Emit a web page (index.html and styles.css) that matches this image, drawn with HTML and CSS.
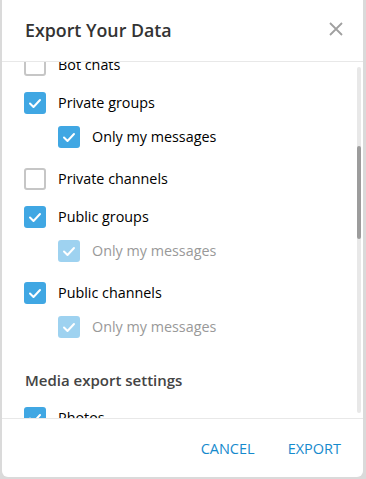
FILE: index.html
```html
<!DOCTYPE html>
<html>
<head>
<meta charset="utf-8">
<link rel="stylesheet" href="styles.css">
</head>
<body>
<div class="dialog">
  <div class="header">
    <div class="title">Export Your Data</div>
    <svg class="close" width="14" height="14" viewBox="0 0 14 14"><path d="M1 1L13 13M13 1L1 13" stroke="#a0a0a0" stroke-width="1.8" fill="none"/></svg>
  </div>
  <div class="content">
    <div class="list">
      <div class="row"><span class="box"></span><span class="label">Bot chats</span></div>
      <div class="row"><span class="box on"><svg viewBox="0 0 22 22"><path d="M6 11.5L9.5 15L16 8" /></svg></span><span class="label">Private groups</span></div>
      <div class="row sub"><span class="box on"><svg viewBox="0 0 22 22"><path d="M6 11.5L9.5 15L16 8" /></svg></span><span class="label">Only my messages</span></div>
      <div class="row"><span class="box"></span><span class="label">Private channels</span></div>
      <div class="row"><span class="box on"><svg viewBox="0 0 22 22"><path d="M6 11.5L9.5 15L16 8" /></svg></span><span class="label">Public groups</span></div>
      <div class="row sub faded"><span class="box on"><svg viewBox="0 0 22 22"><path d="M6 11.5L9.5 15L16 8" /></svg></span><span class="label">Only my messages</span></div>
      <div class="row"><span class="box on"><svg viewBox="0 0 22 22"><path d="M6 11.5L9.5 15L16 8" /></svg></span><span class="label">Public channels</span></div>
      <div class="row sub faded"><span class="box on"><svg viewBox="0 0 22 22"><path d="M6 11.5L9.5 15L16 8" /></svg></span><span class="label">Only my messages</span></div>
      <div class="section">Media export settings</div>
      <div class="row"><span class="box on"><svg viewBox="0 0 22 22"><path d="M6 11.5L9.5 15L16 8" /></svg></span><span class="label">Photos</span></div>
    </div>
    <div class="scrollbar"><div class="thumb"></div></div>
  </div>
  <div class="footer">
    <span class="btn">CANCEL</span>
    <span class="btn">EXPORT</span>
  </div>
</div>
</body>
</html>
```
FILE: styles.css
```css
html, body {
  margin: 0;
  padding: 0;
}
body {
  width: 366px;
  height: 479px;
  overflow: hidden;
  background: #dadada;
  font-family: "Open Sans", "Noto Sans", sans-serif;
}
.dialog {
  margin-left: 2px;
  width: 361px;
  height: 477px;
  background: #fff;
  border-radius: 0 0 6px 6px;
  display: flex;
  flex-direction: column;
  overflow: hidden;
}
.header {
  height: 61px;
  flex: none;
  border-bottom: 1px solid #e8e8e8;
  display: flex;
  align-items: center;
  justify-content: space-between;
  padding: 0 20px 0 23px;
  box-sizing: content-box;
}
.title {
  font-size: 17.8px;
  font-weight: 600;
  color: #333;
  line-height: 24px;
  margin-top: -1px;
}
.close {
  display: block;
  margin-top: -3px;
}
.content {
  flex: 1;
  position: relative;
  overflow: hidden;
}
.list {
  margin-top: -16px;
}
.row {
  display: flex;
  align-items: center;
  gap: 12px;
  padding: 8px 0 8px 22px;
}
.row.sub {
  padding: 4px 0 12px 56px;
}
.box {
  width: 22px;
  height: 22px;
  box-sizing: border-box;
  border: 2px solid #c6c6c6;
  border-radius: 3px;
  flex: none;
  display: block;
}
.box.on {
  border: none;
  background: #40a7e3;
}
.box svg {
  display: block;
  width: 22px;
  height: 22px;
}
.box svg path {
  fill: none;
  stroke: #fff;
  stroke-width: 2;
  stroke-linecap: round;
  stroke-linejoin: round;
}
.label {
  font-size: 14.35px;
  line-height: 20px;
  color: #000;
}
.faded .box {
  opacity: 0.5;
}
.faded .label {
  color: #999;
}
.section {
  font-size: 15px;
  font-weight: 600;
  color: #444;
  line-height: 20px;
  padding: 20px 0 9px 23px;
}
.scrollbar {
  position: absolute;
  right: 2px;
  top: 5px;
  bottom: 5px;
  width: 4px;
  border-radius: 2px;
  background: #e8e8e8;
}
.thumb {
  margin-top: 79px;
  height: 93px;
  border-radius: 2px;
  background: #9c9c9c;
}
.footer {
  flex: none;
  height: 58px;
  border-top: 1px solid #e8e8e8;
  display: flex;
  justify-content: flex-end;
  align-items: center;
  gap: 33px;
  padding-right: 22px;
}
.btn {
  font-size: 14.5px;
  color: #168acd;
  line-height: 20px;
  margin-top: 2px;
}
```
